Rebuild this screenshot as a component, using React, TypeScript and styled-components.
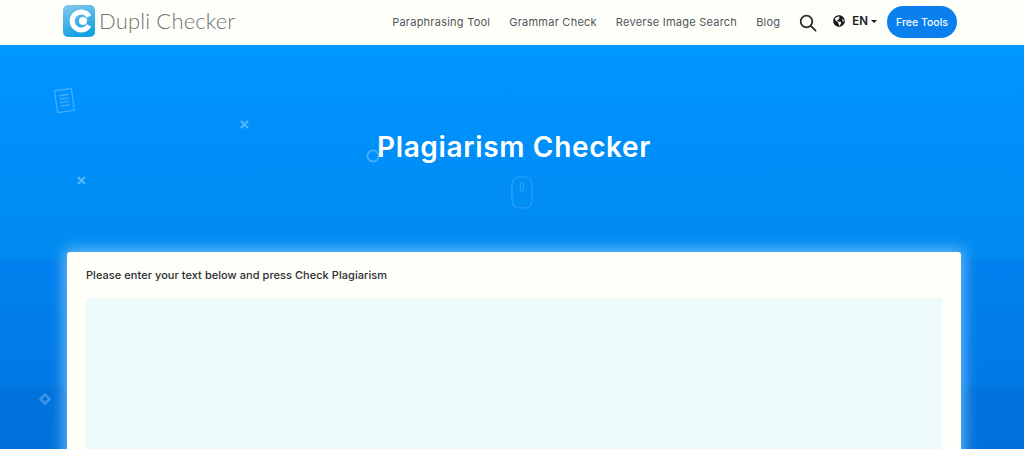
import React from "react";
import styled, { createGlobalStyle } from "styled-components";
import { FaGlobeAmericas } from "react-icons/fa";

const Global = createGlobalStyle`
  html, body { margin: 0; padding: 0; height: 449px; overflow: hidden; background: #0077dd; }
  * { box-sizing: border-box; }
`;

const Page = styled.div`
  width: 1024px;
  height: 449px;
  overflow: hidden;
  font-family: "Inter", "Liberation Sans", sans-serif;
`;

const Header = styled.header`
  height: 45px;
  background: #fffff9;
  display: flex;
  align-items: center;
  padding: 0 67px 0 63px;
`;

const Logo = styled.div`
  display: flex;
  align-items: center;
  gap: 4px;
  margin-top: -4px;
`;

const LogoText = styled.span`
  font-family: "Lato", sans-serif;
  font-weight: 300;
  font-size: 22px;
  color: #6f7377;
  letter-spacing: 0.15px;
`;

const Nav = styled.nav`
  margin-left: auto;
  display: flex;
  align-items: center;
  gap: 19px;
`;

const NavLink = styled.a`
  font-size: 11px;
  letter-spacing: 0.24px;
  color: #50555c;
  white-space: nowrap;
  margin-top: -2px;
`;

const SearchIcon = styled.svg`
  display: block;
  margin: 0;
`;

const Lang = styled.div`
  display: flex;
  align-items: center;
  margin-left: 16px;
  margin-right: 10px;
  margin-top: -3px;
  color: #16181c;
  font-size: 11.5px;
  font-weight: 600;
`;

const LangText = styled.span`
  margin-left: 7px;
`;

const Caret = styled.i`
  width: 0;
  height: 0;
  margin-left: 3px;
  border-left: 3px solid transparent;
  border-right: 3px solid transparent;
  border-top: 3px solid #16181c;
`;

const FreeButton = styled.button`
  width: 70px;
  height: 32px;
  margin-top: -1px;
  border: 0;
  border-radius: 16px;
  padding: 0;
  background: #0a80ee;
  color: #f4f9ff;
  font-family: inherit;
  font-size: 10.5px;
  font-weight: 500;
`;

const Hero = styled.section`
  position: relative;
  height: 404px;
  padding: 85px 0 0 67px;
  background: linear-gradient(
    180deg,
    #0098ff 0%,
    #0091fd 14%,
    #008ef6 35%,
    #008bf0 52%,
    #0080ee 54%,
    #0079e6 84%,
    #0073dc 85%,
    #0071da 100%
  );
`;

const Title = styled.h1`
  margin: 0;
  width: 894px;
  text-align: center;
  color: #ffffff;
  font-size: 28px;
  line-height: 34px;
  font-weight: 600;
  letter-spacing: 0.65px;
`;

const Card = styled.div`
  width: 894px;
  height: 260px;
  margin-top: 88px;
  padding: 15px 19px 0;
  background: #fffff9;
  border-radius: 3px 3px 0 0;
  box-shadow: 0 0 14px 3px rgba(125, 195, 250, 0.85);
`;

const Label = styled.p`
  margin: 0;
  font-size: 11px;
  line-height: 16px;
  font-weight: 500;
  letter-spacing: 0.05px;
  color: #2a2d31;
`;

const TextArea = styled.div`
  height: 240px;
  margin-top: 15px;
  width: 856px;
  background: #edfafa;
  border-radius: 4px 4px 0 0;
`;

const Deco = styled.svg<{ $x: number; $y: number }>`
  position: absolute;
  left: ${(p) => p.$x}px;
  top: ${(p) => p.$y}px;
  overflow: visible;
  fill: none;
  stroke: #ffffff;
`;

export default function App() {
  return (
    <Page>
      <Global />
      <Header>
        <Logo>
          <svg width="32" height="32" viewBox="0 0 32 32">
            <defs>
              <linearGradient id="lg" x1="0" y1="0" x2="0.3" y2="1">
                <stop offset="0" stopColor="#86c8ea" />
                <stop offset="1" stopColor="#17a2e4" />
              </linearGradient>
            </defs>
            <rect width="32" height="32" rx="5" fill="url(#lg)" />
            <path d="M26 11.5 A9 9 0 1 0 26 20.5" fill="none" stroke="#fff" strokeWidth="5" />
            <circle cx="20" cy="16" r="4" fill="#fff" />
          </svg>
          <LogoText>Dupli Checker</LogoText>
        </Logo>
        <Nav>
          <NavLink>Paraphrasing Tool</NavLink>
          <NavLink>Grammar Check</NavLink>
          <NavLink>Reverse Image Search</NavLink>
          <NavLink>Blog</NavLink>
          <SearchIcon width="18" height="18" viewBox="0 0 18 18" fill="none" stroke="#2a2c2e" strokeWidth="1.8">
            <circle cx="7.5" cy="7.5" r="5.8" />
            <path d="M11.8 11.8 L16.6 16.6" strokeLinecap="round" />
          </SearchIcon>
        </Nav>
        <Lang>
          <FaGlobeAmericas size={12} color="#16181c" />
          <LangText>EN</LangText>
          <Caret />
        </Lang>
        <FreeButton>Free Tools</FreeButton>
      </Header>
      <Hero>
        <Deco $x={54} $y={43} width="22" height="26" viewBox="0 0 22 26" strokeOpacity="0.25" strokeWidth="1.3">
          <g transform="rotate(-8 11 13)">
            <rect x="2" y="1.5" width="17" height="22" />
            <path d="M6 7h9M6 10.5h9M6 14h9M6 17.5h9" />
          </g>
        </Deco>
        <Deco $x={240} $y={75} width="9" height="9" viewBox="0 0 9 9" strokeOpacity="0.35" strokeWidth="2">
          <path d="M1 1l7 7M8 1l-7 7" />
        </Deco>
        <Deco $x={77} $y={131} width="9" height="9" viewBox="0 0 9 9" strokeOpacity="0.35" strokeWidth="2">
          <path d="M1 1l7 7M8 1l-7 7" />
        </Deco>
        <Deco $x={366} $y={104} width="14" height="14" viewBox="0 0 14 14" strokeOpacity="0.28" strokeWidth="1.8">
          <circle cx="7" cy="7" r="5.6" />
        </Deco>
        <Deco $x={511} $y={131} width="22" height="33" viewBox="0 0 22 33" strokeOpacity="0.17" strokeWidth="1.2">
          <rect x="1" y="1" width="20" height="31" rx="7" />
          <rect x="9.5" y="6" width="3" height="9" rx="1.5" />
        </Deco>
        <Deco $x={39} $y={348} width="12" height="12" viewBox="0 0 12 12" strokeOpacity="0.25" strokeWidth="2.4">
          <path d="M6 1.5l4.5 4.5-4.5 4.5-4.5-4.5z" />
        </Deco>
        <Title>Plagiarism Checker</Title>
        <Card>
          <Label>Please enter your text below and press Check Plagiarism</Label>
          <TextArea />
        </Card>
      </Hero>
    </Page>
  );
}
